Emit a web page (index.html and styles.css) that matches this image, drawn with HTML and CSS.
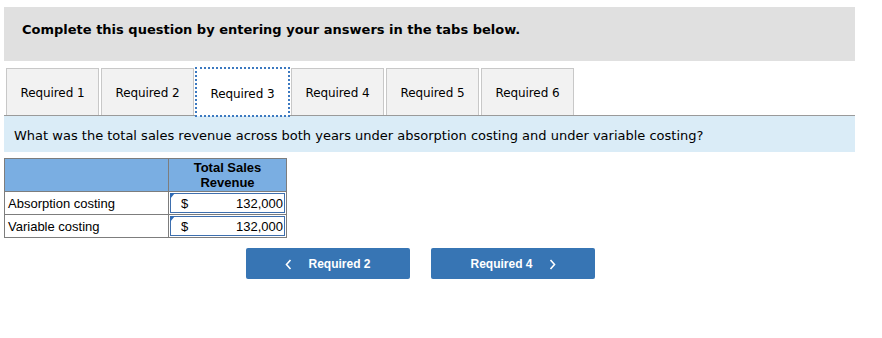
FILE: index.html
```html
<!DOCTYPE html>
<html lang="en">
<head>
  <meta charset="UTF-8" />
  <title>Required 3</title>
  <link rel="stylesheet" href="styles.css">
</head>
<body>
  <div class="sivu">
    <!-- Otsikko -->
    <div class="otsikko">Complete this question by entering your answers in the tabs below.</div>

    <!-- Välilehdet -->
    <div class="valilehdet">
      <div class="tab">Required 1</div>
      <div class="tab">Required 2</div>
      <div class="tab aktiivinen">Required 3</div>
      <div class="tab">Required 4</div>
      <div class="tab">Required 5</div>
      <div class="tab">Required 6</div>
    </div>

    <div class="kysymys">What was the total sales revenue across both years under absorption costing and under variable costing?</div>

    <!-- Taulukko -->
    <table class="taulu">
      <tr class="otsake">
        <th class="eka"></th>
        <th class="toka">Total Sales<br>Revenue</th>
      </tr>
      <tr>
        <td class="eka">Absorption costing</td>
        <td class="syote">
          <div class="kentta"><span class="kolmio"></span><span>$</span><span>132,000</span></div>
        </td>
      </tr>
      <tr>
        <td class="eka">Variable costing</td>
        <td class="syote">
          <div class="kentta"><span class="kolmio"></span><span>$</span><span>132,000</span></div>
        </td>
      </tr>
    </table>

    <!-- Napit -->
    <div class="napit">
      <button class="nappi">
        <svg class="nuoli" width="7" height="11" viewBox="0 0 7 11"><path d="M5.5 1 L1.5 5.5 L5.5 10" fill="none" stroke="white" stroke-width="1.6"/></svg>
        Required 2
      </button>
      <button class="nappi">
        Required 4
        <svg class="nuoli oikea" width="7" height="11" viewBox="0 0 7 11"><path d="M1.5 1 L5.5 5.5 L1.5 10" fill="none" stroke="white" stroke-width="1.6"/></svg>
      </button>
    </div>
  </div>
</body>
</html>
```

FILE: styles.css
```css
html, body {
  margin: 0;
  padding: 0;
  background: white;
  color: black;
}

.sivu {
  width: 851px;
  padding: 7px 0 0 4px;
  font-family: 'DejaVu Sans', Verdana, sans-serif;
}

.otsikko {
  background: #e0e0e0;
  height: 54px;
  box-sizing: border-box;
  padding: 15px 0 0 18px;
  font-size: 13px;
  font-weight: bold;
  line-height: 16px;
}

.valilehdet {
  display: flex;
  gap: 2px;
  margin-top: 7px;
  padding-left: 2px;
  border-bottom: 1px solid #9a9a9a;
}

.tab {
  width: 93px;
  height: 47px;
  box-sizing: border-box;
  padding-top: 2px;
  background: #f2f2f2;
  border: 1px solid #c8c8c8;
  border-bottom: none;
  font-size: 12px;
  display: flex;
  align-items: center;
  justify-content: center;
  letter-spacing: -0.1px;
}

.aktiivinen {
  background: white;
  outline: 2px dotted #3c79c0;
  outline-offset: -1px;
  border-color: white;
  height: 48px;
  margin-bottom: -1px;
}

.kysymys {
  background: #daecf7;
  height: 36px;
  box-sizing: border-box;
  padding: 12px 0 0 10px;
  font-size: 13px;
  line-height: 16px;
}

.taulu {
  margin-top: 6px;
  border-collapse: collapse;
  font-family: 'Liberation Sans', Arial, sans-serif;
  font-size: 13px;
}

.taulu td, .taulu th {
  border: 1px solid #7d7d7d;
  padding: 0;
}

.otsake th {
  background: #7aaee2;
  height: 32px;
  font-weight: bold;
  font-size: 13px;
  line-height: 15px;
}

.eka {
  width: 164px;
  height: 22px;
  padding-left: 3px !important;
  box-sizing: border-box;
  text-align: left;
}

.toka {
  width: 117px;
}

.syote {
  padding: 1px !important;
  background: white;
}

.kentta {
  position: relative;
  height: 20px;
  box-sizing: border-box;
  border: 1px solid #3e6fae;
  display: flex;
  justify-content: space-between;
  align-items: center;
  padding: 0 1px 0 10px;
}

.kolmio {
  position: absolute;
  top: -1px;
  left: -1px;
  width: 0;
  height: 0;
  border-top: 6px solid #2e6ab5;
  border-right: 5px solid transparent;
}

.napit {
  display: flex;
  gap: 21px;
  margin: 10px 0 0 242px;
}

.nappi {
  width: 164px;
  height: 31px;
  padding-top: 2px;
  background: #3775b4;
  color: white;
  border: none;
  border-radius: 2px;
  font-family: 'Liberation Sans', Arial, sans-serif;
  font-weight: bold;
  font-size: 12px;
  display: flex;
  align-items: center;
  justify-content: center;
}

.nuoli {
  margin-right: 16px;
}

.nuoli.oikea {
  margin-right: 0;
  margin-left: 16px;
}
```
